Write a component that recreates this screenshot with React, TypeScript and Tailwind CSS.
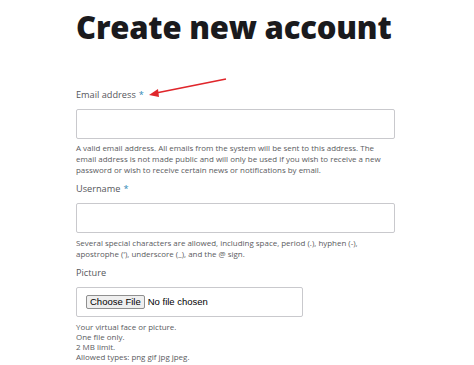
import React from 'react'

const font = { fontFamily: '"Open Sans", "Noto Sans", sans-serif' }
const arial = { fontFamily: '"Liberation Sans", Arial, sans-serif' }

type FieldProps = {
  label: string
  required?: boolean
  className?: string
  children: React.ReactNode
}

const Field: React.FC<FieldProps> = ({ label, required, className, children }) => (
  <div className={className}>
    <div className="text-[9.2px] leading-[12px] text-[#55565b]">
      {label}
      {required && <span className="ml-[3px] text-[#2f87b6]">*</span>}
    </div>
    {children}
  </div>
)

const Help = ({ lines, className }: { lines: string[]; className?: string }) => (
  <p className={`whitespace-nowrap text-[7.95px] leading-[11px] text-[#5a5b60] ${className ?? ''}`}>
    {lines.map((l, i) => (
      <span key={i} className="block">{l}</span>
    ))}
  </p>
)

export default function App() {
  return (
    <div className="relative h-[365px] w-[474px] overflow-hidden bg-white pl-[76px] pt-[9px] text-[#232429]" style={font}>
      <h1 className="text-[31px] font-extrabold leading-[36px] tracking-[-0.2px] text-[#1a1a1d]">Create new account</h1>

      {/* red annotation arrow */}
      <svg className="absolute left-[144px] top-[72px]" width="90" height="30" viewBox="0 0 90 30">
        <line x1="82" y1="7" x2="12" y2="21" stroke="#e0262b" strokeWidth="1.6" />
        <polygon points="5,23 14,17 15,25" fill="#e0262b" />
      </svg>

      <div className="mt-[44px] flex flex-col">
        <Field label="Email address" required>
          <div className="mt-[8px] h-[30px] w-[319px] rounded-[2px] border border-[#c9c9cd]" />
        </Field>
        <Help
          className="mt-[4px]"
          lines={[
            'A valid email address. All emails from the system will be sent to this address. The',
            'email address is not made public and will only be used if you wish to receive a new',
            'password or wish to receive certain news or notifications by email.',
          ]}
        />

        <Field label="Username" required className="mt-[7px]">
          <div className="mt-[8px] h-[30px] w-[319px] rounded-[2px] border border-[#c9c9cd]" />
        </Field>
        <Help
          className="mt-[5px]"
          lines={[
            'Several special characters are allowed, including space, period (.), hyphen (-),',
            "apostrophe ('), underscore (_), and the @ sign.",
          ]}
        />

        <Field label="Picture" className="mt-[7px]">
          <div className="mt-[8px] flex h-[30px] w-[227px] items-center rounded-[2px] border border-[#c9c9cd] pl-[9px]">
            <button
              className="h-[14px] rounded-[2px] border border-[#8f8f8f] bg-[#efefef] px-[3px] text-[9.5px] leading-[12px] text-black"
              style={arial}
            >
              Choose File
            </button>
            <span className="ml-[3px] text-[9.5px] text-black" style={arial}>
              No file chosen
            </span>
          </div>
        </Field>
        <p className="mt-[5px] text-[7.95px] leading-[10px] text-[#5a5b60]">
          <span className="block">Your virtual face or picture.</span>
          <span className="block">One file only.</span>
          <span className="block">2 MB limit.</span>
          <span className="block">Allowed types: png gif jpg jpeg.</span>
        </p>
      </div>
    </div>
  )
}
